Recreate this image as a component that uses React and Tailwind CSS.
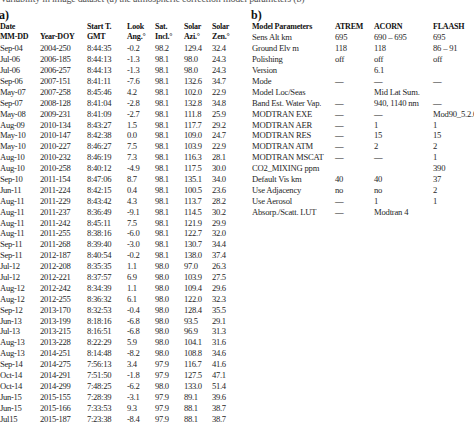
import React from "react";

const leftRows = [
  ["Sep-04", "2004-250", "8:44:35", "-0.2", "98.2", "129.4", "32.4"],
  ["Jul-06", "2006-185", "8:44:13", "-1.3", "98.1", "98.0", "24.3"],
  ["Jul-06", "2006-257", "8:44:13", "-1.3", "98.1", "98.0", "24.3"],
  ["Sep-06", "2007-151", "8:41:11", "-7.6", "98.1", "132.6", "34.7"],
  ["May-07", "2007-258", "8:45:46", "4.2", "98.1", "102.0", "22.9"],
  ["Sep-07", "2008-128", "8:41:04", "-2.8", "98.1", "132.8", "34.8"],
  ["May-08", "2009-231", "8:41:09", "-2.7", "98.1", "111.8", "25.9"],
  ["Aug-09", "2010-134", "8:43:27", "1.5", "98.1", "117.7", "29.2"],
  ["May-10", "2010-147", "8:42:38", "0.0", "98.1", "109.0", "24.7"],
  ["May-10", "2010-227", "8:46:27", "7.5", "98.1", "103.9", "22.9"],
  ["Aug-10", "2010-232", "8:46:19", "7.3", "98.1", "116.3", "28.1"],
  ["Aug-10", "2010-258", "8:40:12", "-4.9", "98.1", "117.5", "30.0"],
  ["Sep-10", "2011-154", "8:47:06", "8.7", "98.1", "135.1", "34.0"],
  ["Jun-11", "2011-224", "8:42:15", "0.4", "98.1", "100.5", "23.6"],
  ["Aug-11", "2011-229", "8:43:42", "4.3", "98.1", "113.7", "28.2"],
  ["Aug-11", "2011-237", "8:36:49", "-9.1", "98.1", "114.5", "30.2"],
  ["Aug-11", "2011-242", "8:45:11", "7.5", "98.1", "121.9", "29.9"],
  ["Aug-11", "2011-255", "8:38:16", "-6.0", "98.1", "122.7", "32.0"],
  ["Sep-11", "2011-268", "8:39:40", "-3.0", "98.1", "130.7", "34.4"],
  ["Sep-11", "2012-187", "8:40:54", "-0.2", "98.1", "138.0", "37.4"],
  ["Jul-12", "2012-208", "8:35:35", "1.1", "98.0", "97.0", "26.3"],
  ["Jul-12", "2012-221", "8:37:57", "6.9", "98.0", "103.9", "27.5"],
  ["Aug-12", "2012-242", "8:34:39", "1.1", "98.0", "109.4", "29.6"],
  ["Aug-12", "2012-255", "8:36:32", "6.1", "98.0", "122.0", "32.3"],
  ["Sep-12", "2013-170", "8:32:53", "-0.4", "98.0", "128.4", "35.5"],
  ["Jun-13", "2013-199", "8:18:16", "-6.8", "98.0", "93.5", "29.1"],
  ["Jul-13", "2013-215", "8:16:51", "-6.8", "98.0", "96.9", "31.3"],
  ["Aug-13", "2013-228", "8:22:29", "5.9", "98.0", "104.1", "31.6"],
  ["Aug-13", "2014-251", "8:14:48", "-8.2", "98.0", "108.8", "34.6"],
  ["Sep-14", "2014-275", "7:56:13", "3.4", "97.9", "116.7", "41.6"],
  ["Oct-14", "2014-291", "7:51:50", "-1.8", "97.9", "127.5", "47.1"],
  ["Oct-14", "2014-299", "7:48:25", "-6.2", "98.0", "133.0", "51.4"],
  ["Jun-15", "2015-155", "7:28:39", "-3.1", "97.9", "89.1", "39.6"],
  ["Jun-15", "2015-166", "7:33:53", "9.3", "97.9", "88.1", "38.7"],
  ["Jul15", "2015-187", "7:23:38", "-8.4", "97.9", "88.1", "38.7"],
];

const rightRows = [
  ["Sens Alt km", "695", "690 – 695", "695"],
  ["Ground Elv m", "118", "118", "86 – 91"],
  ["Polishing", "off", "off", "off"],
  ["Version", "", "6.1", ""],
  ["Mode", "—", "—", "—"],
  ["Model Loc/Seas", "", "Mid Lat Sum.", ""],
  ["Band Est. Water Vap.", "—", "940, 1140 nm", "—"],
  ["MODTRAN EXE", "—", "—", "Mod90_5.2.0"],
  ["MODTRAN AER", "—", "1", "1"],
  ["MODTRAN RES", "—", "15", "15"],
  ["MODTRAN ATM", "—", "2", "2"],
  ["MODTRAN MSCAT", "—", "—", "1"],
  ["CO2_MIXING ppm", "", "", "390"],
  ["Default Vis km", "40", "40", "37"],
  ["Use Adjacency", "no", "no", "2"],
  ["Use Aerosol", "—", "1", "1"],
  ["Absorp./Scatt. LUT", "—", "Modtran 4", ""],
];

const leftCols = "grid grid-cols-[40px_47px_40px_28px_29px_28px_40px] h-[10.9px] leading-[10.9px] whitespace-nowrap";
const rightCols = "grid grid-cols-[83px_39px_59px_60px] h-[10.9px] leading-[10.9px] whitespace-nowrap";

export default function App() {
  return (
    <div
      className="w-[474px] h-[424px] overflow-hidden bg-white text-[#262626]"
      style={{ fontFamily: '"Liberation Serif", "Times New Roman", serif' }}
    >
      <div className="-mt-[6px] h-[13px] text-[10px] leading-[10px] whitespace-nowrap text-[#555] tracking-[-0.2px]">
        Variability in image dataset (a) the atmospheric correction model parameters (b)
      </div>
      <div className="flex">
        <div className="w-[252px] shrink-0">
          <div className="h-[14.5px] leading-[16px] text-[12px] font-bold text-[#111] -ml-[1px]">a)</div>
          <div className="text-[8px] font-bold text-[#111] tracking-[-0.2px]">
            <div className={leftCols}>
              <span>Date</span><span></span><span>Start T.</span><span>Look</span><span>Sat.</span><span>Solar</span><span>Solar</span>
            </div>
            <div className={leftCols}>
              <span>MM-DD</span><span>Year-DOY</span><span>GMT</span><span>Ang.°</span><span>Incl.°</span><span>Azi.°</span><span>Zen.°</span>
            </div>
          </div>
          <div className="text-[8.6px] tracking-[-0.3px]">
            {leftRows.map((r, i) => (
              <div key={i} className={leftCols}>
                {r.map((c, j) => (
                  <span key={j}>{c}</span>
                ))}
              </div>
            ))}
          </div>
        </div>
        <div className="flex-1">
          <div className="h-[14.5px] leading-[16px] text-[12px] font-bold text-[#111] -ml-[1px]">b)</div>
          <div className="text-[8px] font-bold text-[#111] tracking-[-0.2px]">
            <div className={rightCols}>
              <span>Model Parameters</span><span>ATREM</span><span>ACORN</span><span>FLAASH</span>
            </div>
          </div>
          <div className="text-[8.6px] tracking-[-0.2px]">
            {rightRows.map((r, i) => (
              <div key={i} className={rightCols}>
                {r.map((c, j) => (
                  <span key={j}>{c}</span>
                ))}
              </div>
            ))}
          </div>
        </div>
      </div>
    </div>
  );
}
